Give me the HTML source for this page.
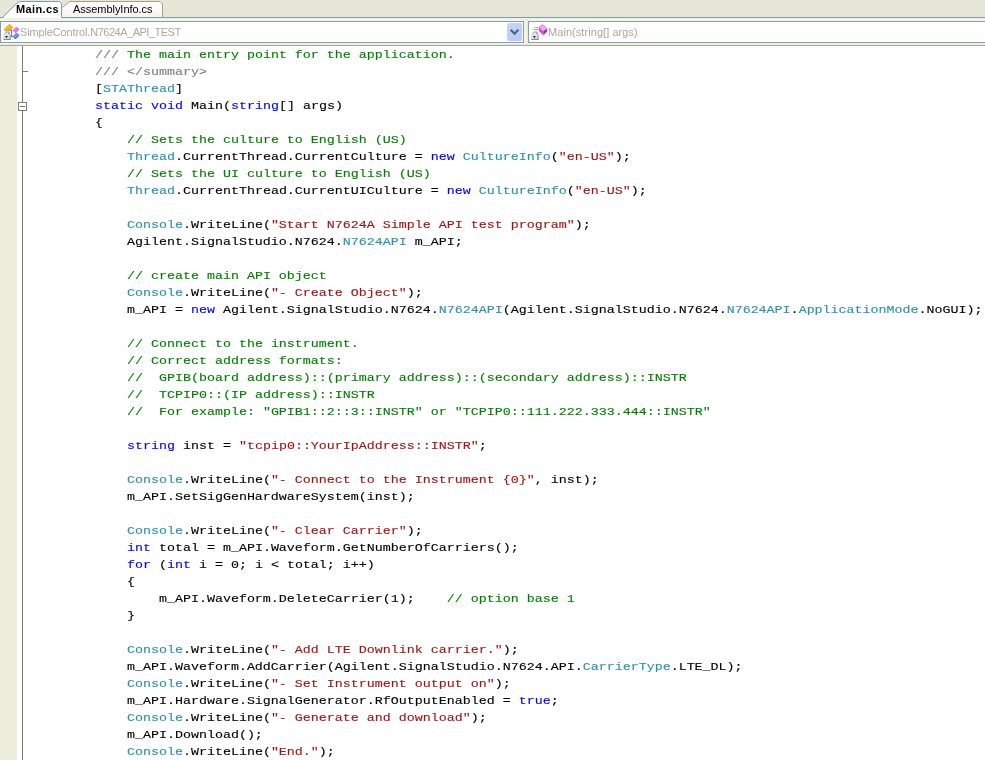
<!DOCTYPE html>
<html><head><meta charset="utf-8">
<style>
html,body{margin:0;padding:0;}
body{width:985px;height:760px;overflow:hidden;background:#fff;position:relative;font-family:"Liberation Sans",sans-serif;}
#strip{position:absolute;left:0;top:0;width:985px;height:17px;background:#E5E6D5;}
#bline{position:absolute;left:0;top:17px;width:985px;height:1px;background:#7F9DB9;}
#band{position:absolute;left:0;top:18px;width:985px;height:28px;background:#F6F4E2;}
#gline{position:absolute;left:0;top:45px;width:985px;height:1px;background:#ACA899;}
.combo{position:absolute;top:21px;height:20px;border:1px solid #7F9DB9;background:#fff;}
#c1{left:0;width:522px;}
#c2{left:528px;width:470px;}
.ctext{will-change:transform;position:absolute;top:4px;font-size:11px;color:#ACA899;white-space:nowrap;line-height:13px;transform-origin:0 0;}
#btn{position:absolute;left:507px;top:23px;width:15px;height:18px;border-radius:2px;background:linear-gradient(135deg,#C9D5FB,#B2CAFA);}
#tabs{position:absolute;left:0;top:0;width:330px;height:22px;}
.tab{will-change:transform;position:absolute;font-size:11px;white-space:nowrap;line-height:13px;color:#000;}
#gutter{position:absolute;left:0;top:46px;width:17px;height:714px;background:#EEEEDD;}
#vline{position:absolute;left:22px;top:46px;width:1px;height:714px;background:#808080;}
#tick{position:absolute;left:22px;top:71px;width:6px;height:1px;background:#808080;}
#box{position:absolute;left:18px;top:102px;width:7px;height:7px;border:1px solid #808080;background:#fff;}
#box i{position:absolute;left:1px;top:3px;width:5px;height:1px;background:#707070;}
pre{-webkit-text-stroke:0.12px;will-change:transform;position:absolute;left:31px;top:46px;margin:0;font-family:"Liberation Mono",monospace;font-size:11.6px;line-height:17px;color:#000;white-space:pre;transform:scaleX(1.1492);transform-origin:0 0;}
.c{color:#008000}.g{color:#808080}.t{color:#2B91AF}.k{color:#0000FF}.s{color:#A31515}
</style></head><body>
<div id="strip"></div>
<div id="band"></div>
<div style="position:absolute;left:0;top:18px;width:985px;height:1px;background:#EFEEDD;"></div>
<div style="position:absolute;left:526px;top:19px;width:2px;height:25px;background:#EEEDDB;"></div>
<div style="position:absolute;left:0;top:44px;width:985px;height:1px;background:#EAE8D6;"></div>
<div id="bline"></div>
<div id="gline"></div>
<svg id="tabs" width="330" height="22" viewBox="0 0 330 22">
  <defs>
    <linearGradient id="tg" x1="0" y1="0" x2="0" y2="1"><stop offset="0" stop-color="#FFFFFF"/><stop offset="0.35" stop-color="#FEFDFD"/><stop offset="1" stop-color="#F5F4EA"/></linearGradient>
  </defs>
  <path d="M62.5 17 V7.5 L69.5 1.5 H160 L162.5 4 V17 Z" fill="url(#tg)" stroke="none"/>
  <path d="M62.5 7.5 L69.5 1.5 H160 L162.5 4 V17" fill="none" stroke="#A3A18B" stroke-width="1"/>
  <path d="M3 18 L17 3.5 Q19 1.5 21 1.5 H59.5 L61.5 3.5 V18 Z" fill="#fff" stroke="none"/>
  <path d="M0 17.5 H2.5 L16.5 3.5 Q18.5 1.5 20.5 1.5 H59.5 L61.5 3.5 V17.5" fill="none" stroke="#7F9DB9" stroke-width="1"/>
</svg>
<div class="tab" style="left:15.8px;top:3px;font-weight:bold;letter-spacing:0.38px;">Main.cs</div>
<div class="tab" style="left:73px;top:3px;letter-spacing:-0.04px;">AssemblyInfo.cs</div>
<div class="combo" id="c1"><div class="ctext" id="t1" style="left:19px;"><span style="letter-spacing:-0.14px">SimpleControl.</span><span style="letter-spacing:-0.49px">N7624A_API_TEST</span></div></div>
<div id="btn"><svg width="15" height="18" viewBox="0 0 15 18"><path d="M4.4 7.6 L7.5 10.7 L10.6 7.6" fill="none" stroke="#4D6185" stroke-width="2.2" stroke-linecap="square" stroke-linejoin="miter"/></svg></div>
<div class="combo" id="c2"><div class="ctext" id="t2" style="left:19px;letter-spacing:0.06px;">Main(string[] args)</div></div>
<svg id="ico1" style="position:absolute;left:0;top:20px" width="24" height="24" viewBox="0 20 24 24">
  <defs>
    <linearGradient id="yg" x1="0" y1="0" x2="1" y2="1"><stop offset="0" stop-color="#F7D255"/><stop offset="1" stop-color="#E3A300"/></linearGradient>
    <linearGradient id="pg" x1="0" y1="0" x2="1" y2="1"><stop offset="0" stop-color="#F9A4F9"/><stop offset="1" stop-color="#D155D1"/></linearGradient>
    <linearGradient id="bg" x1="0" y1="0" x2="1" y2="1"><stop offset="0" stop-color="#8CC4FF"/><stop offset="1" stop-color="#2F6BE0"/></linearGradient>
    <linearGradient id="sg" x1="0" y1="0" x2="1" y2="0"><stop offset="0" stop-color="#CACEE0"/><stop offset="0.6" stop-color="#B4B9CE"/><stop offset="1" stop-color="#8C94AC"/></linearGradient>
    <linearGradient id="lg" x1="0" y1="0" x2="0" y2="1"><stop offset="0" stop-color="#E4E6F0"/><stop offset="0.75" stop-color="#D3D6E4"/><stop offset="1" stop-color="#8A96B2"/></linearGradient>
  </defs>
  <path d="M10.2 30.4 H11.6 V36.5 H13.4" fill="none" stroke="#64809A" stroke-width="1.1"/>
  <path d="M3.9 29.5 L9.5 24.1 L12.9 27.5 L9.4 30.9 L5.4 30.9 Z" fill="url(#yg)" stroke="#D09810" stroke-width="0.6"/>
  <path d="M16.5 26.9 L19 29.4 L15.4 32.8 L13.05 30.4 Z" fill="url(#pg)" stroke="#B846B8" stroke-width="0.6"/>
  <path d="M16.5 33.05 L19 35.4 L15.4 39 L13.05 36.5 Z" fill="url(#bg)" stroke="#2344C0" stroke-width="0.6"/>
  <g id="lock">
    <path d="M4.4 35 V32.9 Q4.4 31.2 6.1 31.2 H8.2 Q9.9 31.2 9.9 32.9 V35 Z" fill="url(#sg)"/>
    <rect x="6.3" y="33.1" width="1.9" height="1.4" fill="#FFFFFF"/>
    <rect x="3.2" y="34.4" width="7.5" height="5.5" rx="0.8" fill="url(#lg)"/>
    <path d="M10.3 34.9 V39.4" stroke="#7F8CA8" stroke-width="0.9"/><path d="M3.9 39.5 H10.4" stroke="#6F80A0" stroke-width="0.8"/>
    <path d="M4.9 36 H8.1 L6.9 37.3 V37.9 H6.1 V37.3 Z" fill="#23242E"/>
  </g>
</svg>
<svg id="ico2" style="position:absolute;left:528px;top:20px" width="24" height="24" viewBox="528 20 24 24">
  <defs>
    <linearGradient id="mg" x1="0" y1="0" x2="1" y2="0"><stop offset="0" stop-color="#F2E65E"/><stop offset="1" stop-color="#7E8FB4"/></linearGradient>
  </defs>
  <rect x="533.9" y="27" width="4" height="1" fill="url(#mg)"/>
  <rect x="531.9" y="29" width="6" height="1" fill="url(#mg)"/>
  <g transform="translate(0,0.5)">
  <path d="M539 27 L542.4 23.9 L547 28.2 L543.4 30.6 Z" fill="#F7A2F7"/>
  <path d="M539 27 L543.4 30.6 V34.5 L539 30.2 Z" fill="#D050D0"/>
  <path d="M547 28.2 V31 L543.4 34.5 V30.6 Z" fill="#9A2A9A"/>
  <path d="M539 27 L542.4 23.9 L547 28.2 V31 L543.4 34.5 L539 30.2 Z" fill="none" stroke="#B03CB0" stroke-width="0.5"/>
  </g>
  <g transform="translate(527.9,0)">
    <path d="M4.4 35 V32.9 Q4.4 31.2 6.1 31.2 H8.2 Q9.9 31.2 9.9 32.9 V35 Z" fill="url(#sg)"/>
    <rect x="6.3" y="33.1" width="1.9" height="1.4" fill="#FFFFFF"/>
    <rect x="3.2" y="34.4" width="7.5" height="5.5" rx="0.8" fill="url(#lg)"/>
    <path d="M10.3 34.9 V39.4" stroke="#7F8CA8" stroke-width="0.9"/><path d="M3.9 39.5 H10.4" stroke="#6F80A0" stroke-width="0.8"/>
    <path d="M4.9 36 H8.1 L6.9 37.3 V37.9 H6.1 V37.3 Z" fill="#23242E"/>
  </g>
</svg>
<div id="gutter"></div>
<div id="vline"></div>
<div id="tick"></div>
<div id="box"><i></i></div>
<pre>        <span class="g">///</span><span class="c"> The main entry point for the application.</span>
        <span class="g">/// &lt;/summary&gt;</span>
        [<span class="t">STAThread</span>]
        <span class="k">static</span> <span class="k">void</span> Main(<span class="k">string</span>[] args)
        {
            <span class="c">// Sets the culture to English (US)</span>
            <span class="t">Thread</span>.CurrentThread.CurrentCulture = <span class="k">new</span> <span class="t">CultureInfo</span>(<span class="s">"en-US"</span>);
            <span class="c">// Sets the UI culture to English (US)</span>
            <span class="t">Thread</span>.CurrentThread.CurrentUICulture = <span class="k">new</span> <span class="t">CultureInfo</span>(<span class="s">"en-US"</span>);

            <span class="t">Console</span>.WriteLine(<span class="s">"Start N7624A Simple API test program"</span>);
            Agilent.SignalStudio.N7624.<span class="t">N7624API</span> m_API;

            <span class="c">// create main API object</span>
            <span class="t">Console</span>.WriteLine(<span class="s">"- Create Object"</span>);
            m_API = <span class="k">new</span> Agilent.SignalStudio.N7624.<span class="t">N7624API</span>(Agilent.SignalStudio.N7624.<span class="t">N7624API</span>.<span class="t">ApplicationMode</span>.NoGUI);

            <span class="c">// Connect to the instrument.</span>
            <span class="c">// Correct address formats:</span>
            <span class="c">//  GPIB(board address)::(primary address)::(secondary address)::INSTR</span>
            <span class="c">//  TCPIP0::(IP address)::INSTR</span>
            <span class="c">//  For example: "GPIB1::2::3::INSTR" or "TCPIP0::111.222.333.444::INSTR"</span>

            <span class="k">string</span> inst = <span class="s">"tcpip0::YourIpAddress::INSTR"</span>;

            <span class="t">Console</span>.WriteLine(<span class="s">"- Connect to the Instrument {0}"</span>, inst);
            m_API.SetSigGenHardwareSystem(inst);

            <span class="t">Console</span>.WriteLine(<span class="s">"- Clear Carrier"</span>);
            <span class="k">int</span> total = m_API.Waveform.GetNumberOfCarriers();
            <span class="k">for</span> (<span class="k">int</span> i = 0; i &lt; total; i++)
            {
                m_API.Waveform.DeleteCarrier(1);    <span class="c">// option base 1</span>
            }

            <span class="t">Console</span>.WriteLine(<span class="s">"- Add LTE Downlink carrier."</span>);
            m_API.Waveform.AddCarrier(Agilent.SignalStudio.N7624.API.<span class="t">CarrierType</span>.LTE_DL);
            <span class="t">Console</span>.WriteLine(<span class="s">"- Set Instrument output on"</span>);
            m_API.Hardware.SignalGenerator.RfOutputEnabled = <span class="k">true</span>;
            <span class="t">Console</span>.WriteLine(<span class="s">"- Generate and download"</span>);
            m_API.Download();
            <span class="t">Console</span>.WriteLine(<span class="s">"End."</span>);
</pre>
</body></html>
